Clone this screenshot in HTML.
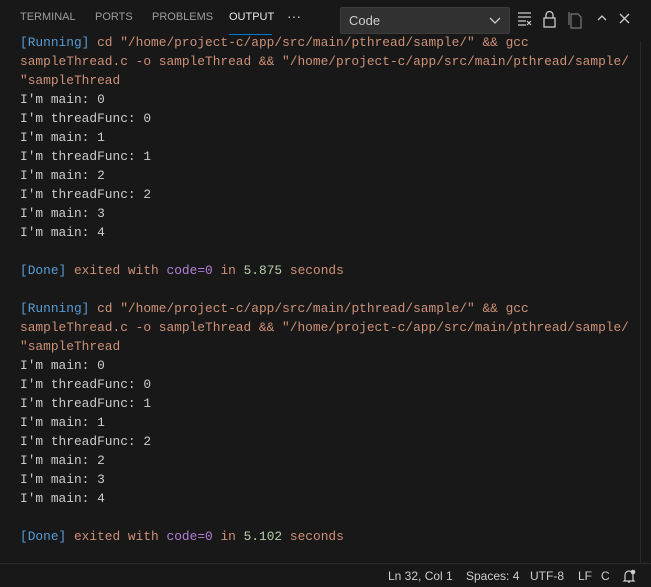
<!DOCTYPE html>
<html><head><style>
*{margin:0;padding:0;box-sizing:border-box}
body{width:651px;height:587px;background:#181818;overflow:hidden;position:relative;font-family:"Liberation Sans",sans-serif;color:#ccc}
.tab{position:absolute;top:11px;font-size:11px;color:#9d9d9d}
.out{font-family:"Liberation Mono",monospace;font-size:12.85px;position:absolute;left:20px;top:33px;line-height:19px;color:#ccc;white-space:pre}
.o{color:#ce9178}.b{color:#569cd6}.p{color:#b180d7}.g{color:#b5cea8}
.sb{position:absolute;left:0;top:563px;width:651px;height:24px;border-top:1px solid #2b2b2b;font-size:12px;color:#ccc}
.sb span{position:absolute;top:5px}
</style></head><body>
<div class="tab" style="left:20px">TERMINAL</div>
<div class="tab" style="left:95px">PORTS</div>
<div class="tab" style="left:152px">PROBLEMS</div>
<div class="tab" style="left:229px;color:#e7e7e7">OUTPUT</div>
<div style="position:absolute;left:229px;top:34px;width:43px;height:1px;background:#0078d4"></div>
<div class="tab" style="left:287px;top:8px;font-size:14px;color:#ccc">···</div>
<div style="position:absolute;left:340px;top:7px;width:170px;height:27px;background:#313131;border:1px solid #3c3c3c;border-radius:2px;font-size:13px;color:#ccc;padding:5px 8px">Code
<svg style="position:absolute;right:8px;top:8px" width="12" height="10"><path d="M1 2l5 5 5-5" stroke="#ccc" fill="none" stroke-width="1.3"/></svg></div>
<svg style="position:absolute;left:516px;top:10px" width="120" height="20">
<path d="M2 3h13M2 7h13M2 11h8M2 15h8M11 11l4 4M15 11l-4 4" stroke="#ccc" stroke-width="1.2" fill="none"/>
<rect x="28" y="8" width="11" height="9" stroke="#ccc" fill="none" stroke-width="1.3"/><path d="M30 8V5a3.5 3.5 0 0 1 7 0v3" stroke="#ccc" fill="none" stroke-width="1.3"/>
<path d="M55 4h7l3 3v11h-10zM53 2v13" stroke="#777" fill="none" stroke-width="1.2"/>
<path d="M82 10l4-4 4 4" stroke="#ccc" fill="none" stroke-width="1.3"/>
<path d="M104 4l9 9M113 4l-9 9" stroke="#ccc" fill="none" stroke-width="1.3"/>
</svg>
<div style="position:absolute;left:640px;top:41px;width:1px;height:522px;background:#2b2b2b"></div>
<div class="out"><span class="b">[Running]</span> <span class="o">cd "/home/project-c/app/src/main/pthread/sample/" &amp;&amp; gcc
sampleThread.c -o sampleThread &amp;&amp; "/home/project-c/app/src/main/pthread/sample/
"sampleThread</span>
I'm main: 0
I'm threadFunc: 0
I'm main: 1
I'm threadFunc: 1
I'm main: 2
I'm threadFunc: 2
I'm main: 3
I'm main: 4

<span class="b">[Done]</span> <span class="o">exited with</span> <span class="p">code=0</span> <span class="o">in</span> <span class="g">5.875</span> <span class="o">seconds</span>

<span class="b">[Running]</span> <span class="o">cd "/home/project-c/app/src/main/pthread/sample/" &amp;&amp; gcc
sampleThread.c -o sampleThread &amp;&amp; "/home/project-c/app/src/main/pthread/sample/
"sampleThread</span>
I'm main: 0
I'm threadFunc: 0
I'm threadFunc: 1
I'm main: 1
I'm threadFunc: 2
I'm main: 2
I'm main: 3
I'm main: 4

<span class="b">[Done]</span> <span class="o">exited with</span> <span class="p">code=0</span> <span class="o">in</span> <span class="g">5.102</span> <span class="o">seconds</span></div>
<div class="sb">
<span style="left:388px">Ln 32, Col 1</span>
<span style="left:466px">Spaces: 4</span>
<span style="left:530px">UTF-8</span>
<span style="left:578px">LF</span>
<span style="left:601px">C</span>
<svg style="position:absolute;left:622px;top:5px" width="14" height="14"><path d="M3 11V6a4 4 0 0 1 8 0v5l1 1H2zM6 13h2" stroke="#ccc" fill="none" stroke-width="1.2"/><circle cx="11" cy="3" r="2.3" fill="#ccc"/></svg>
</div>
</body></html>
